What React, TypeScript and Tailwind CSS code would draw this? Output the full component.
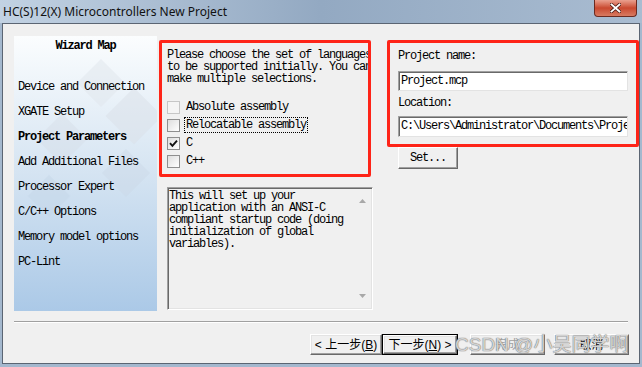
import type { ReactNode } from "react";

const mono = "font-['Liberation_Mono',monospace] text-[12px] leading-[12px] tracking-[-1.2px] text-black";
const cjk = "font-['Liberation_Sans','Noto_Sans_CJK_SC',sans-serif] text-[12px]";

const wizardSteps = [
  { label: "Device and Connection" },
  { label: "XGATE Setup" },
  { label: "Project Parameters", active: true },
  { label: "Add Additional Files" },
  { label: "Processor Expert" },
  { label: "C/C++ Options" },
  { label: "Memory model options" },
  { label: "PC-Lint" },
];

function CheckBox({ checked, disabled }: { checked?: boolean; disabled?: boolean }) {
  return (
    <span
      className={`w-[13px] h-[13px] shrink-0 border flex items-center justify-center ${
        disabled
          ? "border-[#c6c6c6] bg-[#f4f4f4]"
          : "border-[#8f8f8f] bg-linear-to-br from-[#dedede] to-white"
      }`}
    >
      {checked && (
        <svg width="9" height="9" viewBox="0 0 9 9">
          <path d="M1 4.2 L3.4 6.8 L8 1.6" stroke="#111" strokeWidth="1.9" fill="none" />
        </svg>
      )}
    </span>
  );
}

function Option({
  label,
  checked,
  disabled,
  focused,
}: {
  label: string;
  checked?: boolean;
  disabled?: boolean;
  focused?: boolean;
}) {
  return (
    <div className="h-[18px] flex items-center gap-[5px]">
      <CheckBox checked={checked} disabled={disabled} />
      <span
        className={`${mono} px-[1px] py-[1px] ${disabled ? "text-[#a6a6a6]" : ""} ${
          focused ? "outline outline-dotted outline-1 outline-black" : ""
        }`}
      >
        {label}
      </span>
    </div>
  );
}

function Button({
  children,
  width,
  primary,
  disabled,
}: {
  children: ReactNode;
  width: string;
  primary?: boolean;
  disabled?: boolean;
}) {
  return (
    <div className={`${width} h-[21px] ${primary ? "border border-black" : ""}`}>
      <div className="w-full h-full border border-t-white border-l-white border-r-[#696969] border-b-[#696969] bg-[#f0f0f0] shadow-[inset_-1px_-1px_0_#a0a0a0,inset_1px_1px_0_#e3e3e3] flex items-center justify-center">
        <span className={`${cjk} leading-[12px] ${disabled ? "text-[#a0a0a0]" : "text-black"}`}>
          {children}
        </span>
      </div>
    </div>
  );
}

function TextInput({ value, height }: { value: string; height: string }) {
  return (
    <div
      className={`w-[230px] ${height} bg-white border border-t-[#a0a0a0] border-l-[#a0a0a0] border-r-[#e3e3e3] border-b-[#e3e3e3] shadow-[inset_1px_1px_0_#696969] pl-[2px] pt-[3px] overflow-hidden whitespace-nowrap ${mono}`}
    >
      {value}
    </div>
  );
}

export default function App() {
  return (
    <div className="relative w-[642px] h-[367px] overflow-hidden flex flex-col bg-[#a4b8ce]">
      {/* title bar */}
      <div className="h-[23px] shrink-0 flex items-center justify-between bg-linear-to-r from-[#c2d2e3] via-[#93a9c2] to-[#a9bcd1] pl-[3px]">
        <span className="font-['Noto_Sans',sans-serif] text-[12px] leading-[14px] text-[#111]">
          HC(S)12(X) Microcontrollers New Project
        </span>
        <div className="self-start w-[43px] h-[17px] mr-[5px] rounded-b-[4px] border border-t-0 border-[#6b2a20] bg-linear-to-b from-[#e9a08f] via-[#c9482f] to-[#d87a61] flex items-center justify-center">
          <svg width="11" height="10" viewBox="0 0 11 10">
            <path d="M1.5 1.5 L9.5 8.5 M9.5 1.5 L1.5 8.5" stroke="#4a1a14" strokeWidth="3.4" strokeLinecap="square" />
            <path d="M1.5 1.5 L9.5 8.5 M9.5 1.5 L1.5 8.5" stroke="#fff" strokeWidth="1.9" strokeLinecap="square" />
          </svg>
        </div>
      </div>

      <div className="flex-1 flex pl-[2px] pr-[3px] pb-[3px]">
        <div className="flex-1 flex flex-col border border-[#5b6573] bg-[#f0f0f0]">
          <div className="flex items-start pl-[11px]">
            {/* wizard map */}
            <div className="relative mt-[12px] w-[143px] h-[275px] overflow-hidden bg-linear-to-b from-[#fbfdfe] via-[#d5e4f2] to-[#abc9e7] pt-[4px] pl-[4px]">
              <div className="absolute left-[70px] top-[30px] w-[34px] h-[34px] rotate-45 bg-[#dfe5ec]/50" />
              <div className="absolute left-[100px] top-[60px] w-[40px] h-[40px] rotate-45 bg-[#d9e0e8]/50" />
              <div className="absolute left-[30px] top-[85px] w-[36px] h-[36px] rotate-45 bg-[#d4dde7]/40" />
              <div className="absolute left-[95px] top-[120px] w-[34px] h-[34px] rotate-45 bg-[#cbd8e6]/40" />
              <div className="absolute left-[20px] top-[145px] w-[30px] h-[30px] rotate-45 bg-[#c4d4e5]/40" />
              <div className={`relative ${mono} font-bold text-center pr-[4px]`}>Wizard Map</div>
              <div className="relative mt-[23px] flex flex-col">
                {wizardSteps.map((s) => (
                  <div
                    key={s.label}
                    className={`h-[25px] font-['Liberation_Mono',monospace] text-[12px] leading-[25px] tracking-[-1.2px] text-black ${s.active ? "font-bold" : ""}`}
                  >
                    {s.label}
                  </div>
                ))}
              </div>
            </div>

            {/* languages */}
            <div className="ml-[2px] mt-[16px] flex flex-col">
              <div className="w-[212px] h-[137px] border-[3px] border-[#fe2418] rounded-[2px] pl-[5px] pt-[6px] overflow-hidden">
                <div className={`${mono} whitespace-pre`}>
                  {"Please choose the set of languages\nto be supported initially. You can\nmake multiple selections."}
                </div>
                <div className="mt-[13px] flex flex-col">
                  <Option label="Absolute assembly" disabled />
                  <Option label="Relocatable assembly" focused />
                  <Option label="C" checked />
                  <Option label="C++" />
                </div>
              </div>
              <div className="ml-[8px] mt-[10px] w-[206px] h-[123px] flex border border-t-[#a0a0a0] border-l-[#a0a0a0] border-r-white border-b-white shadow-[inset_1px_1px_0_#696969,inset_-1px_-1px_0_#e3e3e3]">
                <div className={`flex-1 pl-[1px] pt-[2px] ${mono} whitespace-pre`}>
                  {"This will set up your\napplication with an ANSI-C\ncompliant startup code (doing\ninitialization of global\nvariables)."}
                </div>
                <div className="w-[17px] flex flex-col justify-between items-center py-[11px] pr-[2px]">
                  <svg width="7" height="4" viewBox="0 0 7 4">
                    <path d="M0 4 L3.5 0 L7 4 Z" fill="#a8a8a8" />
                  </svg>
                  <svg width="7" height="4" viewBox="0 0 7 4">
                    <path d="M0 0 L3.5 4 L7 0 Z" fill="#a8a8a8" />
                  </svg>
                </div>
              </div>
            </div>

            {/* project */}
            <div className="ml-[14px] mt-[16px] flex flex-col">
              <div className="w-[252px] h-[107px] border-[3px] border-[#fe2418] rounded-[2px] pl-[8px] pt-[7px]">
                <div className={mono}>Project name:</div>
                <div className="mt-[9px]">
                  <TextInput value="Project.mcp" height="h-[20px]" />
                </div>
                <div className={`mt-[6px] ${mono}`}>Location:</div>
                <div className="mt-[7px]">
                  <TextInput value="C:\Users\Administrator\Documents\Project" height="h-[21px]" />
                </div>
              </div>
              <div className="ml-[11px] w-[60px] h-[22px] border border-t-white border-l-white border-r-[#696969] border-b-[#696969] shadow-[inset_-1px_-1px_0_#a0a0a0] flex items-center justify-center">
                <span className={mono}>Set...</span>
              </div>
            </div>
          </div>

          <div className="ml-[11px] mt-[10px] w-[614px] border-t border-t-[#a0a0a0] border-b border-b-white" />

          <div className="mt-[11px] pr-[10px] flex justify-end">
            <Button width="w-[72px]">
              &lt; 上一步(<u>B</u>)
            </Button>
            <Button width="w-[76px]" primary>
              下一步(<u>N</u>) &gt;
            </Button>
            <div className="ml-[12px]">
              <Button width="w-[75px]" disabled>
                完成
              </Button>
            </div>
            <div className="ml-[9px]">
              <Button width="w-[75px]">取消</Button>
            </div>
          </div>
        </div>
      </div>

      {/* watermark */}
      <span className="absolute left-[455px] top-[335px] font-['Liberation_Sans','Noto_Sans_CJK_SC',sans-serif] text-[19px] leading-[19px] text-white/70 [text-shadow:0_0_1px_#6f6f6f,0_0_1px_#6f6f6f]">
        CSDN @小吴同学啊
      </span>
    </div>
  );
}
